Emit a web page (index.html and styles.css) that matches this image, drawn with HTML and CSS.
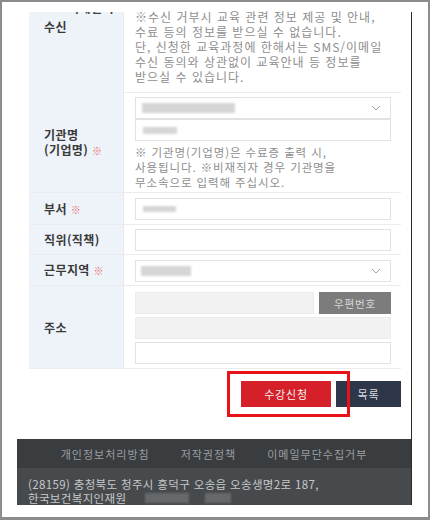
FILE: index.html
```html
<!DOCTYPE html>
<html lang="ko">
<head>
<meta charset="utf-8">
<title>수강신청</title>
<link rel="stylesheet" href="styles.css">
</head>
<body>
<div class="frame">
  <div class="screen">
    <div class="form">
      <div class="row row-sms">
        <div class="label label-top">
          <div class="fragment"><span>이메일 수신동의</span></div>
          <span>수신</span>
        </div>
        <div class="cell">
          <p class="info">※수신 거부시 교육 관련 정보 제공 및 안내,<br>수료 등의 정보를 받으실 수 없습니다.<br>단, 신청한 교육과정에 한해서는 SMS/이메일<br>수신 동의와 상관없이 교육안내 등 정보를<br>받으실 수 있습니다.</p>
        </div>
      </div>

      <div class="row row-org">
        <div class="label"><span>기관명<br>(기업명) <em class="req">※</em></span></div>
        <div class="cell">
          <div class="field select"><span class="blur blur-org"></span><svg class="chev" width="10" height="6" viewBox="0 0 10 6"><polyline points="1,1 5,5 9,1" fill="none" stroke="#a0a0a0" stroke-width="1"/></svg></div>
          <div class="field"><span class="blur blur-org2"></span></div>
          <p class="note">※ 기관명(기업명)은 수료증 출력 시,<br>사용됩니다. ※비재직자 경우 기관명을<br>무소속으로 입력해 주십시오.</p>
        </div>
      </div>

      <div class="row row-single">
        <div class="label"><span>부서 <em class="req">※</em></span></div>
        <div class="cell">
          <div class="field"><span class="blur blur-dept"></span></div>
        </div>
      </div>

      <div class="row row-single row-pos">
        <div class="label"><span>직위(직책)</span></div>
        <div class="cell">
          <div class="field"></div>
        </div>
      </div>

      <div class="row row-single row-area">
        <div class="label"><span>근무지역 <em class="req">※</em></span></div>
        <div class="cell">
          <div class="field select"><span class="blur blur-area"></span><svg class="chev" width="10" height="6" viewBox="0 0 10 6"><polyline points="1,1 5,5 9,1" fill="none" stroke="#a0a0a0" stroke-width="1"/></svg></div>
        </div>
      </div>

      <div class="row row-addr">
        <div class="label"><span>주소</span></div>
        <div class="cell addr">
          <div class="addr-line">
            <div class="field disabled zip"></div>
            <div class="zip-btn">우편번호</div>
          </div>
          <div class="field disabled"></div>
          <div class="field"></div>
        </div>
      </div>

      <div class="actions">
        <div class="btn-wrap">
          <div class="btn btn-apply">수강신청</div>
          <div class="highlight"></div>
        </div>
        <div class="btn btn-list">목록</div>
      </div>
    </div>

    <div class="footer">
      <div class="footer-links">
        <span>개인정보처리방침</span>
        <span>저작권정책</span>
        <span>이메일무단수집거부</span>
      </div>
      <div class="footer-addr">
        <div class="fline">(28159) 충청북도 청주시 흥덕구 오송읍 오송생명2로 187,</div>
        <div class="fline">한국보건복지인재원<span class="fblur fblur1"></span><span class="fblur fblur2"></span></div>
      </div>
    </div>
  </div>
</div>
</body>
</html>
```

FILE: styles.css
```css
* { box-sizing: border-box; }
html, body { margin: 0; padding: 0; background: #fff; }
body {
  font-family: "Noto Sans CJK KR", "Noto Sans", "Liberation Sans", sans-serif;
  color: #333;
}
.frame {
  width: 430px;
  height: 520px;
  border: 2px solid #8c8c8c;
  border-bottom-width: 3px;
  background: #fff;
  overflow: hidden;
}
.screen {
  margin: 10px 0 0 15px;
  width: 395px;
  border-right: 1px solid #2a2a2a;
}
.form {
  padding: 0 10px 0 12px;
}
.row {
  display: grid;
  grid-template-columns: 95px 1fr;
  border-bottom: 1px solid #ececec;
}
.label {
  background: #eef2f9;
  border-right: 1px solid #e6e9ee;
  padding-left: 15px;
  display: flex;
  align-items: center;
  font-size: 12px;
  font-weight: bold;
  line-height: 15px;
  color: #3a3a3a;
  letter-spacing: 0.4px;
}
.label-top {
  flex-direction: column;
  align-items: flex-start;
  justify-content: flex-start;
}
.fragment {
  height: 3px;
  overflow: hidden;
}
.fragment span {
  display: block;
  margin-top: -12px;
  padding-left: 24px;
  line-height: 15px;
  color: #444;
}
.label-top > span { margin-top: 4px; }
.req {
  font-style: normal;
  color: #e8696b;
  font-size: 10px;
  font-weight: normal;
}
.cell {
  padding: 4px 10px 4px 11px;
}
.info {
  margin: -3px 0 0;
  font-size: 12px;
  line-height: 15px;
  letter-spacing: 1px;
  color: #8e8e8e;
  white-space: nowrap;
}
.row-sms .cell { padding-top: 0; padding-bottom: 9px; }
.row-sms { height: 81px; }
.row-org .cell { padding-top: 4px; padding-bottom: 2px; }
.note {
  margin: 4px 0 0;
  font-size: 11.5px;
  line-height: 15px;
  letter-spacing: 0.9px;
  color: #8e8e8e;
  white-space: nowrap;
}
.field {
  height: 22px;
  border: 1px solid #e2e2e2;
  background: #fff;
  display: flex;
  align-items: center;
}
.field.disabled {
  background: #f2f2f2;
  border-color: #ececec;
}
.select {
  justify-content: space-between;
  padding-right: 9px;
}
.chev { display: block; }
.blur {
  display: block;
  background: #d6d6d6;
  filter: blur(1.2px);
}
.blur-org { width: 93px; height: 10px; margin-left: 6px; }
.blur-org2 { width: 34px; height: 7px; margin-left: 7px; }
.blur-dept { width: 33px; height: 6px; margin-left: 7px; }
.blur-area { width: 50px; height: 10px; margin-left: 5px; }
.row-single .cell { padding-top: 5px; padding-bottom: 4px; }
.row-pos .cell { padding-top: 4px; padding-bottom: 3px; }
.row-area .cell { padding-top: 5px; padding-bottom: 3px; }
.addr {
  display: flex;
  flex-direction: column;
  gap: 3px;
  padding-top: 6px;
  padding-bottom: 4px;
}
.addr-line {
  display: flex;
  gap: 5px;
}
.zip { flex: 1; }
.zip-btn {
  width: 72px;
  height: 22px;
  background: #7c7c7c;
  color: #d8d8d8;
  font-size: 10.5px;
  letter-spacing: 0.8px;
  display: flex;
  align-items: center;
  justify-content: center;
}
.actions {
  display: flex;
  justify-content: flex-end;
  gap: 5px;
  margin-top: 12px;
}
.btn-wrap { position: relative; }
.btn {
  height: 26px;
  display: flex;
  align-items: center;
  justify-content: center;
  color: #f3f3f3;
  font-size: 11px;
  letter-spacing: 0.8px;
}
.btn-apply { width: 90px; background: #d5202a; }
.btn-list { width: 65px; background: #2e3649; color: #d9dbe0; }
.highlight {
  position: absolute;
  left: -14px;
  top: -10px;
  width: 123px;
  height: 46px;
  border: 3px solid #ea1219;
}
.footer {
  margin-top: 32px;
}
.footer-links {
  height: 29px;
  background: #3a3d40;
  display: flex;
  justify-content: center;
  align-items: center;
  gap: 31px;
  font-size: 11px;
  letter-spacing: 1px;
  color: #9b9ea1;
}
.footer-addr {
  height: 37px;
  background: #474a4d;
  padding: 9px 11px 0;
  font-size: 11.5px;
  line-height: 14px;
  letter-spacing: 0.35px;
  color: #c6c8ca;
  white-space: nowrap;
}
.fline {
  height: 14px;
  display: flex;
  align-items: center;
}
.fblur {
  display: block;
  height: 10px;
  background: #66696c;
  filter: blur(1px);
}
.fblur1 { width: 44px; margin-left: 19px; }
.fblur2 { width: 26px; margin-left: 16px; }
```
